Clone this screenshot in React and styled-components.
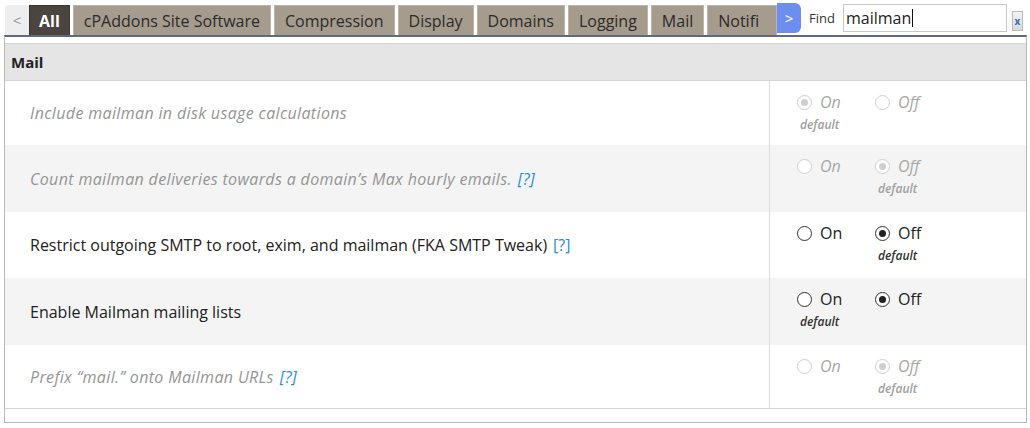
import React from "react";
import styled, { createGlobalStyle } from "styled-components";

const GlobalStyle = createGlobalStyle`
    html, body {
        margin: 0;
        padding: 0;
        background: #fff;
        font-family: "Open Sans", "DejaVu Sans", sans-serif;
        color: #333;
    }
`;

const Page = styled.div`
    width: 1030px;
    height: 428px;
    overflow: hidden;
    background: #fff;
`;

const TopBar = styled.div`
    display: flex;
    align-items: flex-end;
    height: 35px;
    padding-left: 5px;
`;

const Tabs = styled.div`
    display: flex;
    align-items: flex-end;
    gap: 3px;
    width: 772px;
    overflow: hidden;
    white-space: nowrap;
`;

const ScrollButton = styled.div`
    flex: none;
    width: 24px;
    height: 30px;
    display: flex;
    align-items: center;
    justify-content: center;
    font-size: 15px;
    line-height: 1;
    color: ${(p) => (p.$active ? "#fff" : "#999")};
    background: ${(p) => (p.$active ? "#6c8ef0" : "#eeeeee")};
    border-radius: ${(p) => (p.$active ? "0 6px 6px 0" : "4px 0 0 0")};
    margin-bottom: ${(p) => (p.$active ? "2px" : "0")};
`;

const Tab = styled.div`
    flex: ${(p) => (p.$cut ? "1 1 0" : "none")};
    min-width: 0;
    height: 29px;
    padding: 0 ${(p) => (p.$selected ? "9px" : "10px")};
    display: flex;
    align-items: center;
    font-size: 16px;
    font-weight: ${(p) => (p.$selected ? 700 : 400)};
    color: ${(p) => (p.$selected ? "#fff" : "#2b2b2b")};
    background: ${(p) => (p.$selected ? "#4a4541" : "#a69c8e")};
    border: 1px solid ${(p) => (p.$selected ? "#3a3633" : "#bdb5aa")};
    border-bottom: none;
    margin-left: ${(p) => (p.$first ? "-3px" : "0")};
    padding-right: ${(p) => (p.$cut ? "0" : p.$selected ? "9px" : "10px")};
`;

const FindArea = styled.div`
    display: flex;
    align-items: center;
    align-self: flex-start;
    height: 33px;
    padding-top: 1px;
    margin-left: 4px;
`;

const FindLabel = styled.span`
    font-size: 13px;
    line-height: 1;
    color: #333;
    margin: 2px 8px 0 4px;
`;

const FindInput = styled.div`
    width: 158px;
    height: 26px;
    border: 1px solid #c8c8c8;
    padding: 0 2px;
    display: flex;
    align-items: center;
    font-size: 16px;
    color: #222;
`;

const Caret = styled.span`
    display: inline-block;
    width: 1px;
    height: 18px;
    background: #111;
    margin-left: 1px;
`;

const ClearButton = styled.div`
    width: 9px;
    height: 18px;
    margin: 7px 0 0 5px;
    background: linear-gradient(#f4f4f4, #d8d8d8);
    border: 1px solid #bbb;
    font-size: 10px;
    font-weight: 700;
    color: #2f6fd1;
    display: flex;
    align-items: center;
    justify-content: center;
    line-height: 1;
`;

const Panel = styled.div`
    margin: 0 3px 0 4px;
    height: 388px;
    border: 1px solid #b9b9b9;
    border-top: 2px solid #606a7c;
    box-sizing: border-box;
    padding-top: 6px;
`;

const Section = styled.div`
    border-top: 1px solid #d6d6d6;
    border-bottom: 1px solid #d6d6d6;
`;

const Header = styled.div`
    height: 36px;
    background: #e5e5e5;
    display: flex;
    align-items: center;
    padding-left: 6px;
    font-size: 15px;
    font-weight: 700;
    color: #222;
    border-bottom: 1px solid #d6d6d6;
`;

const Row = styled.div`
    display: grid;
    grid-template-columns: 765px 1fr;
    height: ${(p) => p.$h}px;
    background: ${(p) => (p.$alt ? "#f4f4f4" : "#fff")};
`;

const Label = styled.div`
    display: flex;
    align-items: center;
    padding-left: 25px;
    font-size: 16px;
    font-style: ${(p) => (p.$disabled ? "italic" : "normal")};
    letter-spacing: ${(p) => (p.$disabled ? "0.35px" : "0")};
    color: ${(p) => (p.$disabled ? "#959595" : "#222")};
    border-right: 1px solid #dcdcdc;
`;

const Help = styled.span`
    color: #1e8fd6;
    margin-left: 6px;
`;

const Options = styled.div`
    display: flex;
    gap: 14px;
    padding: 10px 0 0 27px;
`;

const Option = styled.div`
    display: flex;
    flex-direction: column;
    align-items: center;
    width: 64px;
`;

const Choice = styled.div`
    display: flex;
    align-items: center;
    gap: 8px;
    width: 64px;
    font-size: 16px;
    font-style: ${(p) => (p.$disabled ? "italic" : "normal")};
    color: ${(p) => (p.$disabled ? "#a8a8a8" : "#222")};
`;

const Radio = styled.span`
    width: 13px;
    height: 13px;
    border-radius: 50%;
    border: 1px solid ${(p) => (p.$disabled ? "#d0d0d0" : "#333")};
    background: #fff;
    display: flex;
    align-items: center;
    justify-content: center;
    flex: none;

    &::after {
        content: "";
        display: ${(p) => (p.$checked ? "block" : "none")};
        width: 7px;
        height: 7px;
        border-radius: 50%;
        background: ${(p) => (p.$disabled ? "#cfcfcf" : "#222")};
    }
`;

const Default = styled.div`
    font-size: 12px;
    font-style: italic;
    font-weight: 600;
    color: ${(p) => (p.$disabled ? "#a0a0a0" : "#333")};
    margin-top: 3px;
    align-self: flex-start;
    padding-left: 3px;
`;

const tabs = [
    "cPAddons Site Software",
    "Compression",
    "Display",
    "Domains",
    "Logging",
    "Mail",
];

const rows = [
    {
        label: "Include mailman in disk usage calculations",
        disabled: true,
        value: "on",
        def: "on",
        h: 64,
    },
    {
        label: "Count mailman deliveries towards a domain\u2019s Max hourly emails.",
        help: true,
        disabled: true,
        value: "off",
        def: "off",
        alt: true,
        h: 67,
    },
    {
        label: "Restrict outgoing SMTP to root, exim, and mailman (FKA SMTP Tweak)",
        help: true,
        value: "off",
        def: "off",
        h: 66,
    },
    {
        label: "Enable Mailman mailing lists",
        value: "off",
        def: "on",
        alt: true,
        h: 67,
    },
    {
        label: "Prefix \u201cmail.\u201d onto Mailman URLs",
        help: true,
        disabled: true,
        value: "off",
        def: "off",
        h: 63,
    },
];

const Setting = ({ row }) => (
    <Row $alt={row.alt} $h={row.h}>
        <Label $disabled={row.disabled}>
            {row.label}
            {row.help && <Help>[?]</Help>}
        </Label>
        <Options>
            {["on", "off"].map((v) => (
                <Option key={v}>
                    <Choice $disabled={row.disabled}>
                        <Radio $checked={row.value === v} $disabled={row.disabled} />
                        {v === "on" ? "On" : "Off"}
                    </Choice>
                    {row.def === v && <Default $disabled={row.disabled}>default</Default>}
                </Option>
            ))}
        </Options>
    </Row>
);

const App = () => {
    return (
        <Page>
            <GlobalStyle />
            <TopBar>
                <Tabs>
                    <ScrollButton>&lt;</ScrollButton>
                    <Tab $selected $first>All</Tab>
                    {tabs.map((t) => (
                        <Tab key={t}>{t}</Tab>
                    ))}
                    <Tab $cut>Notifi</Tab>
                </Tabs>
                <ScrollButton $active>&gt;</ScrollButton>
                <FindArea>
                    <FindLabel>Find</FindLabel>
                    <FindInput>
                        mailman<Caret />
                    </FindInput>
                    <ClearButton>x</ClearButton>
                </FindArea>
            </TopBar>
            <Panel>
                <Section>
                    <Header>Mail</Header>
                    {rows.map((r) => (
                        <Setting key={r.label} row={r} />
                    ))}
                </Section>
            </Panel>
        </Page>
    );
};

export default App;
